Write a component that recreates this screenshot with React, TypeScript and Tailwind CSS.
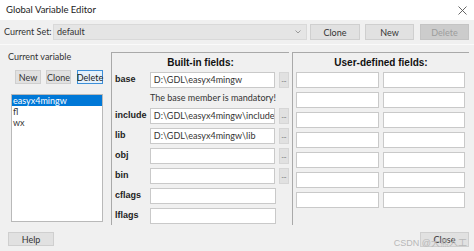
import React from "react";

const ui = "font-['Lato','Noto_Sans_CJK_SC',sans-serif]";
const bold = "font-['Liberation_Sans',Arial,sans-serif] font-bold";

function Btn({
  label,
  className = "",
  kind = "normal",
}: {
  label: string;
  className?: string;
  kind?: "normal" | "focus" | "disabled";
}) {
  const look =
    kind === "focus"
      ? "bg-[#e5f1fb] border-[#3c8fd8] text-[#222]"
      : kind === "disabled"
      ? "bg-[#cccccc] border-[#c4c4c4] text-[#9c9c9c]"
      : "bg-[#e1e1e1] border-[#cfcfcf] text-[#333]";
  return (
    <div
      className={`flex items-center justify-center border text-[9px] leading-none ${look} ${className}`}
    >
      {label}
    </div>
  );
}

function Field({ value = "", className = "" }: { value?: string; className?: string }) {
  return (
    <div
      className={`h-[16px] bg-white border border-[#c9c9c9] flex items-center px-[3px] text-[9px] text-[#333] whitespace-nowrap overflow-hidden ${className}`}
    >
      {value}
    </div>
  );
}

function Dots() {
  return (
    <div className="ml-[4px] w-[10px] h-[16px] bg-[#e1e1e1] border border-[#d6d6d6] flex items-end justify-center pb-[4px] text-[7px] leading-none text-[#666]">
      ...
    </div>
  );
}

const builtIn = [
  { name: "base", value: "D:\\GDL\\easyx4mingw", dots: true },
  { name: "include", value: "D:\\GDL\\easyx4mingw\\include", dots: true },
  { name: "lib", value: "D:\\GDL\\easyx4mingw\\lib", dots: true },
  { name: "obj", value: "", dots: true },
  { name: "bin", value: "", dots: true },
  { name: "cflags", value: "", dots: false },
  { name: "lflags", value: "", dots: false },
];

export default function App() {
  return (
    <div className={`w-[474px] h-[251px] bg-[#f0f0f0] flex flex-col overflow-hidden ${ui}`}>
      {/* Title bar */}
      <div className="h-[20px] bg-white flex items-center justify-between pl-[6px] pr-[7px]">
        <span className="text-[9.5px] text-[#222] pt-[1px]">Global Variable Editor</span>
        <svg width="9" height="9" viewBox="0 0 9 9" className="mt-[1px]">
          <path d="M0.5 0.5 L8.5 8.5 M8.5 0.5 L0.5 8.5" stroke="#555" strokeWidth="0.9" />
        </svg>
      </div>

      {/* Current set row */}
      <div className="mt-[4px] h-[16px] flex items-center pl-[4px]">
        <span className="w-[49px] whitespace-nowrap text-[9px] text-[#333]">Current Set:</span>
        <div className="w-[254px] h-[16px] bg-[#e5e5e5] border border-[#d9d9d9] flex items-center justify-between pl-[3px] pr-[5px] text-[9px] text-[#333]">
          <span>default</span>
          <svg width="6" height="4" viewBox="0 0 6 4">
            <path d="M0.5 0.5 L3 3 L5.5 0.5" fill="none" stroke="#888" strokeWidth="0.8" />
          </svg>
        </div>
        <Btn label="Clone" className="ml-[3px] w-[50px] h-[16px]" />
        <Btn label="New" className="ml-[5px] w-[49px] h-[16px]" />
        <Btn label="Delete" kind="disabled" className="ml-[6px] w-[49px] h-[16px]" />
      </div>

      <div className="mt-[4px] h-px bg-[#fafafa]" />

      {/* Main */}
      <div className="flex h-[178px] mt-[3px]">
        {/* Current variable */}
        <div className="w-[111px] flex flex-col">
          <span className="mt-[2px] pl-[8px] h-[14px] text-[9px] leading-[14px] text-[#333]">
            Current variable
          </span>
          <div className="flex mt-[6px] pl-[15px]">
            <Btn label="New" className="w-[26px] h-[14px]" />
            <Btn label="Clone" className="ml-[5px] w-[25px] h-[14px]" />
            <Btn label="Delete" kind="focus" className="ml-[6px] w-[26px] h-[14px]" />
          </div>
          <div className="ml-[11px] mt-[10px] w-[92px] h-[128px] bg-white border border-[#b9b9b9] flex flex-col text-[9px] text-[#333] leading-[11px]">
            <span className="bg-[#0078d7] text-white pl-[1px] h-[11px]">easyx4mingw</span>
            <span className="pl-[1px] h-[11px]">fl</span>
            <span className="pl-[1px] h-[11px]">wx</span>
          </div>
        </div>

        {/* Built-in fields */}
        <div className="mt-[4px] w-[178px] h-[173px] border-l border-t border-[#a9a9a9] flex flex-col">
          <div className={`h-[19px] pt-[4px] text-center text-[10px] leading-[12px] text-[#111] ${bold}`}>
            Built-in fields:
          </div>
          {builtIn.map((f, i) => (
            <React.Fragment key={f.name}>
              <div className={`flex items-center ${i > 1 ? "mt-[4px]" : ""}`}>
                <span className={`w-[38px] pl-[3px] text-[9px] text-[#222] ${bold}`}>{f.name}</span>
                <Field value={f.value} className="w-[126px]" />
                {f.dots && <Dots />}
              </div>
              {i === 0 && (
                <div className="h-[20px] pl-[38px] flex items-center whitespace-nowrap text-[9px] text-[#333]">
                  The base member is mandatory!
                </div>
              )}
            </React.Fragment>
          ))}
        </div>

        {/* User-defined fields */}
        <div className="mt-[4px] ml-[3px] w-[177px] h-[173px] border-l border-t border-[#a9a9a9] flex flex-col">
          <div className={`h-[19px] pt-[4px] text-center text-[10px] leading-[12px] text-[#111] ${bold}`}>
            User-defined fields:
          </div>
          <div className="grid grid-cols-[83px_82px] gap-x-[4px] gap-y-[4px] pl-[3px]">
            {Array.from({ length: 14 }).map((_, i) => (
              <Field key={i} />
            ))}
          </div>
        </div>
      </div>

      {/* Bottom */}
      <div className="flex items-start justify-between mt-[6px] pl-[8px] pr-[5px]">
        <Btn label="Help" className="w-[46px] h-[14px]" />
        <div className="relative">
          <Btn label="Close" className="w-[49px] h-[15px]" />
          <span className="absolute right-[2px] top-[5px] whitespace-nowrap text-[9px] text-[#b8b8b8] font-['Liberation_Sans','Noto_Sans_CJK_SC',sans-serif]">
            CSDN @大熊人工
          </span>
        </div>
      </div>
    </div>
  );
}
